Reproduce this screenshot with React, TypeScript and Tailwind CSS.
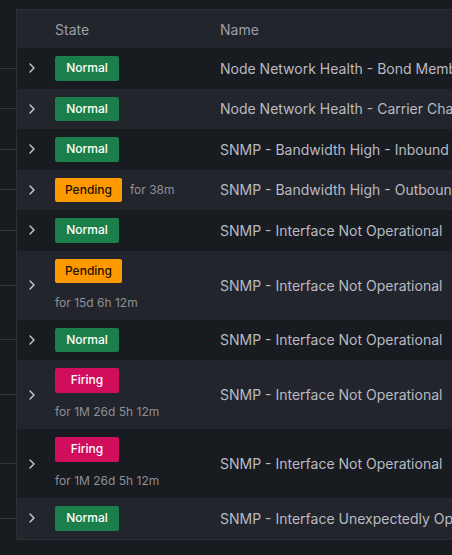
import React from 'react'
import { ChevronRight } from 'lucide-react'

type State = 'Normal' | 'Pending' | 'Firing'

type Rule = {
  state: State
  name: string
  since?: string
  wrap?: boolean
}

const rules: Rule[] = [
  { state: 'Normal', name: 'Node Network Health - Bond Member Down' },
  { state: 'Normal', name: 'Node Network Health - Carrier Changes' },
  { state: 'Normal', name: 'SNMP - Bandwidth High - Inbound' },
  { state: 'Pending', name: 'SNMP - Bandwidth High - Outbound', since: 'for 38m' },
  { state: 'Normal', name: 'SNMP - Interface Not Operational' },
  { state: 'Pending', name: 'SNMP - Interface Not Operational', since: 'for 15d 6h 12m', wrap: true },
  { state: 'Normal', name: 'SNMP - Interface Not Operational' },
  { state: 'Firing', name: 'SNMP - Interface Not Operational', since: 'for 1M 26d 5h 12m', wrap: true },
  { state: 'Firing', name: 'SNMP - Interface Not Operational', since: 'for 1M 26d 5h 12m', wrap: true },
  { state: 'Normal', name: 'SNMP - Interface Unexpectedly Operational' },
]

function StateBadge({ state }: { state: State }) {
  const tone =
    state === 'Normal'
      ? 'bg-[#1a7f4b] text-white'
      : state === 'Pending'
        ? 'bg-[#ff9900] text-[#1b1200]'
        : 'bg-[#d10e5c] text-white'
  return (
    <span
      className={`inline-flex h-[24.5px] min-w-[64px] items-center justify-center rounded-[2px] px-[10px] text-[12px] font-medium ${tone}`}
    >
      {state}
    </span>
  )
}

export default function App() {
  return (
    <div
      className="h-[555px] w-[452px] overflow-hidden bg-[#181b1f] pt-[9px]"
      style={{ fontFamily: 'Inter, "Noto Sans", sans-serif' }}
    >
      <div className="flex w-[640px] flex-col">
        {/* Header */}
        <div className="flex">
          <div className="w-4 shrink-0" />
          <div className="grid h-[39px] flex-1 grid-cols-[38px_165px_1fr] items-center border-l border-t border-[#2c3035] bg-[#22252b] text-[14px] text-[#9d9ea8]">
            <div />
            <div>State</div>
            <div>Name</div>
          </div>
        </div>

        {/* Rows */}
        {rules.map((rule, i) => (
          <div key={i} className="flex">
            <div className="flex w-4 shrink-0 items-center">
              <div className="h-px w-full bg-[#34373d]" />
            </div>
            <div
              className={`grid flex-1 grid-cols-[38px_165px_1fr] items-center border-l border-[#2c3035] ${
                i % 2 === 0 ? 'bg-[#181b1f]' : 'bg-[#22252b]'
              } ${i === rules.length - 1 ? 'border-b' : ''}`}
            >
              <div className="flex items-center pl-[7px] text-[#ccccdc]">
                <ChevronRight size={16} strokeWidth={2} />
              </div>
              <div
                className={`flex py-2 ${
                  rule.wrap ? 'flex-col items-start gap-[10.5px]' : 'items-center gap-2'
                }`}
              >
                <StateBadge state={rule.state} />
                {rule.since && (
                  <span className="text-[12px] leading-[18px] text-[#8e8f99]">{rule.since}</span>
                )}
              </div>
              <div className="whitespace-nowrap text-[14px] text-[#b9bac4]">{rule.name}</div>
            </div>
          </div>
        ))}
      </div>
    </div>
  )
}
